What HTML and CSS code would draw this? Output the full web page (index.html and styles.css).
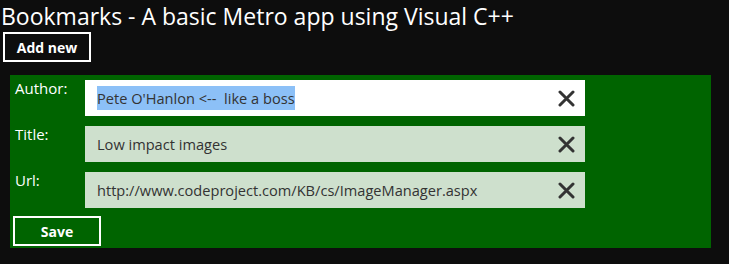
FILE: index.html
```html
<!DOCTYPE html>
<html>
<head>
<meta charset="utf-8">
<link rel="stylesheet" href="styles.css">
</head>
<body>
<h1 class="title">Bookmarks - A basic Metro app using Visual C++</h1>
<div class="toolbar"><button class="btn btn-add">Add new</button></div>
<div class="panel">
  <div class="form">
    <label class="label">Author:</label>
    <div class="field field-focus"><span class="value"><span class="sel">Pete O'Hanlon &lt;--&nbsp; like a boss</span></span><span class="clear"><svg width="17" height="17" viewBox="0 0 17 17"><path d="M2 2 L15 15 M15 2 L2 15" stroke="#333" stroke-width="3" stroke-linecap="round" fill="none"/></svg></span></div>
    <label class="label">Title:</label>
    <div class="field"><span class="value">Low impact images</span><span class="clear"><svg width="17" height="17" viewBox="0 0 17 17"><path d="M2 2 L15 15 M15 2 L2 15" stroke="#333" stroke-width="3" stroke-linecap="round" fill="none"/></svg></span></div>
    <label class="label">Url:</label>
    <div class="field"><span class="value">http://www.codeproject.com/KB/cs/ImageManager.aspx</span><span class="clear"><svg width="17" height="17" viewBox="0 0 17 17"><path d="M2 2 L15 15 M15 2 L2 15" stroke="#333" stroke-width="3" stroke-linecap="round" fill="none"/></svg></span></div>
  </div>
  <button class="btn btn-save">Save</button>
</div>
</body>
</html>
```
FILE: styles.css
```css
html, body {
  margin: 0;
  padding: 0;
  background: #0d0d0d;
  font-family: "Open Sans", "Liberation Sans", sans-serif;
  color: #fff;
}
.title {
  margin: 0;
  padding: 2px 0 0 1px;
  height: 30px;
  font-size: 23px;
  line-height: 28px;
  font-weight: 400;
  white-space: nowrap;
}
.toolbar {
  padding-left: 3px;
  height: 43px;
}
.btn {
  display: flex;
  align-items: center;
  justify-content: center;
  width: 88px;
  height: 30px;
  box-sizing: border-box;
  border: 2px solid #fff;
  background: transparent;
  color: #fff;
  font-family: "Open Sans", "Liberation Sans", sans-serif;
  font-size: 14px;
  font-weight: 700;
  padding: 0;
}
.panel {
  margin-left: 10px;
  width: 701px;
  height: 173px;
  box-sizing: border-box;
  background: #006400;
  padding: 5px 0 0 3px;
}
.form {
  display: grid;
  grid-template-columns: 72px 500px;
  row-gap: 10px;
  margin-bottom: 8px;
}
.label {
  padding: 0 0 0 2px;
  font-size: 15px;
  line-height: 16px;
}
.field {
  height: 36px;
  background: #cee0cd;
  display: flex;
  align-items: center;
  justify-content: space-between;
  padding: 0 10px 0 12px;
  box-sizing: border-box;
  color: #333;
  font-size: 14.6px;
}
.field-focus {
  background: #fff;
}
.sel {
  background: #8cc0f7;
  padding: 2px 0;
}
.value {
  white-space: nowrap;
}
.clear {
  display: flex;
  width: 17px;
  height: 17px;
}
```
